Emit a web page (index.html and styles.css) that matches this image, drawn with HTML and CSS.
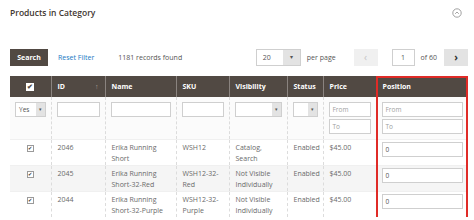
FILE: index.html
```html
<!DOCTYPE html>
<html>
<head>
<title>Products in Category</title>
<link rel="stylesheet" href="styles.css">
</head>
<body>
<div class="section">
  <div class="section-head">
    <span class="section-title">Products in Category</span>
    <svg class="collapse" width="10" height="10" viewBox="0 0 10 10">
      <circle cx="5" cy="5" r="4.2" fill="none" stroke="#8a8a8a" stroke-width="0.8"/>
      <path d="M3.2 5.8 L5 4 L6.8 5.8" fill="none" stroke="#8a8a8a" stroke-width="0.8"/>
    </svg>
  </div>

  <div class="toolbar">
    <button class="btn-search">Search</button>
    <a class="reset">Reset Filter</a>
    <span class="records">1181 records found</span>
    <div class="pager">
      <div class="perpage-select"><span class="val">20</span><span class="arrow">&#9662;</span></div>
      <span class="perpage-label">per page</span>
      <button class="nav prev">&lsaquo;</button>
      <div class="page-input">1</div>
      <span class="of">of 60</span>
      <button class="nav next">&rsaquo;</button>
    </div>
  </div>

  <div class="grid-wrap">
    <table class="grid">
      <colgroup>
        <col class="c-cb"><col class="c-id"><col class="c-name"><col class="c-sku">
        <col class="c-vis"><col class="c-status"><col class="c-price"><col class="c-pos">
      </colgroup>
      <thead>
        <tr class="head">
          <th class="center"><span class="hcheck">&#10004;</span></th>
          <th>ID <span class="sort">&#8593;</span></th>
          <th>Name</th>
          <th>SKU</th>
          <th>Visibility</th>
          <th>Status</th>
          <th>Price</th>
          <th>Position</th>
        </tr>
        <tr class="filters">
          <td><div class="select small"><span>Yes</span><span class="arrow">&#9662;</span></div></td>
          <td><div class="input"></div></td>
          <td><div class="input"></div></td>
          <td><div class="input"></div></td>
          <td><div class="select"><span></span><span class="arrow">&#9662;</span></div></td>
          <td><div class="select"><span></span><span class="arrow">&#9662;</span></div></td>
          <td><div class="input ph">From</div><div class="input ph">To</div></td>
          <td><div class="input ph">From</div><div class="input ph">To</div></td>
        </tr>
      </thead>
      <tbody>
        <tr>
          <td class="center"><span class="check">&#10004;</span></td>
          <td>2046</td>
          <td>Erika Running Short</td>
          <td>WSH12</td>
          <td>Catalog, Search</td>
          <td>Enabled</td>
          <td>$45.00</td>
          <td><div class="input val">0</div></td>
        </tr>
        <tr class="alt">
          <td class="center"><span class="check">&#10004;</span></td>
          <td>2045</td>
          <td>Erika Running Short-32-Red</td>
          <td>WSH12-32-Red</td>
          <td>Not Visible Individually</td>
          <td>Enabled</td>
          <td>$45.00</td>
          <td><div class="input val">0</div></td>
        </tr>
        <tr>
          <td class="center"><span class="check">&#10004;</span></td>
          <td>2044</td>
          <td>Erika Running Short-32-Purple</td>
          <td>WSH12-32-Purple</td>
          <td>Not Visible Individually</td>
          <td>Enabled</td>
          <td>$45.00</td>
          <td><div class="input val">0</div></td>
        </tr>
      </tbody>
    </table>
    <div class="highlight"></div>
  </div>
</div>
</body>
</html>
```

FILE: styles.css
```css
body {
    margin: 0;
    padding: 0;
    background: #fff;
    font-family: "Open Sans", "Liberation Sans", sans-serif;
    color: #303030;
    overflow: hidden;
}

.section {
    width: 458px;
    padding-left: 10px;
}

.section-head {
    display: flex;
    justify-content: space-between;
    align-items: center;
    padding-top: 7px;
    height: 12px;
}

.section-title {
    font-size: 8.5px;
    font-weight: 600;
    color: #41362f;
    line-height: 12px;
}

.collapse {
    margin-right: 6px;
}

.toolbar {
    display: flex;
    align-items: center;
    margin-top: 30px;
    height: 17px;
}

.btn-search {
    width: 38px;
    height: 17px;
    border: 0;
    padding: 0;
    background: #514943;
    color: #fff;
    font-family: inherit;
    font-size: 7px;
    font-weight: 700;
}

.reset {
    margin-left: 10px;
    font-size: 7px;
    color: #1979c3;
}

.records {
    margin-left: 24px;
    font-size: 7px;
    color: #555;
}

.pager {
    margin-left: auto;
    display: flex;
    align-items: center;
    font-size: 7px;
    color: #555;
}

.perpage-select {
    display: flex;
    width: 45px;
    height: 17px;
    box-sizing: border-box;
    border: 1px solid #cfcfcf;
}

.perpage-select .val {
    flex: 1;
    padding-left: 6px;
    line-height: 15px;
}

.perpage-select .arrow,
.select .arrow {
    width: 17px;
    background: #e3e3e3;
    color: #555;
    font-size: 6px;
    text-align: center;
    line-height: 15px;
}

.perpage-label {
    margin-left: 6px;
}

.nav {
    width: 24px;
    height: 17px;
    border: 0;
    padding: 0;
    font-family: inherit;
    font-size: 10px;
    line-height: 17px;
}

.prev {
    margin-left: 18px;
    background: #f0f0f0;
    color: #c4c4c4;
}

.next {
    margin-left: 7px;
    background: #e3e3e3;
    color: #303030;
    font-weight: bold;
}

.page-input {
    margin-left: 14px;
    width: 23px;
    height: 17px;
    box-sizing: border-box;
    border: 1px solid #cfcfcf;
    text-align: center;
    line-height: 15px;
}

.of {
    margin-left: 6px;
}

.grid-wrap {
    position: relative;
    margin-top: 10px;
}

.grid {
    width: 458px;
    table-layout: fixed;
    border-collapse: collapse;
    font-size: 7px;
}

.c-cb { width: 41px; }
.c-id { width: 54px; }
.c-name { width: 71px; }
.c-sku { width: 53px; }
.c-vis { width: 58px; }
.c-status { width: 36px; }
.c-price { width: 53px; }
.c-pos { width: 92px; }

.head th {
    height: 21px;
    padding: 0 6px;
    background: #514943;
    color: #fff;
    font-weight: 700;
    text-align: left;
    border-left: 1px solid #8a837f;
}

.head th:first-child {
    border-left: 0;
}

.center {
    text-align: center !important;
}

.hcheck {
    display: inline-block;
    width: 8px;
    height: 8px;
    background: #fff;
    color: #514943;
    font-size: 7px;
    line-height: 8px;
    text-align: center;
}

.sort {
    float: right;
    color: #a79d95;
    font-weight: 400;
}

.filters td {
    height: 42px;
    padding: 5px 5px;
    vertical-align: top;
    background: #fbfbfb;
    border-left: 1px dashed #dcdcdc;
    box-sizing: border-box;
}

.filters td:first-child {
    border-left: 0;
}

.input {
    height: 15px;
    box-sizing: border-box;
    border: 1px solid #cfcfcf;
    background: #fff;
    font-size: 6.5px;
    line-height: 13px;
    padding-left: 3px;
}

.input + .input {
    margin-top: 2px;
}

.ph {
    color: #a0a0a0;
}

.select {
    display: flex;
    height: 15px;
    box-sizing: border-box;
    border: 1px solid #cfcfcf;
    background: #fff;
    font-size: 6.5px;
    line-height: 13px;
}

.select span:first-child {
    flex: 1;
    padding-left: 3px;
    color: #555;
}

.select .arrow {
    width: 9px;
    line-height: 13px;
    font-size: 5px;
}

tbody td {
    padding: 2px 6px 1px;
    vertical-align: top;
    color: #6a6a6a;
    line-height: 11px;
    border-left: 1px dashed #dcdcdc;
}

tbody td:first-child {
    border-left: 0;
}

tbody tr {
    border-top: 1px solid #f0f0f0;
}

tbody tr.alt td {
    background: #f5f5f5;
}

tbody td:last-child {
    padding: 2px 5px 0;
}

.val {
    color: #555;
}

.check {
    display: inline-block;
    width: 7px;
    height: 7px;
    box-sizing: border-box;
    border: 1px solid #9a9a9a;
    background: #fff;
    color: #333;
    font-size: 5px;
    line-height: 5px;
    margin-top: 2px;
}

.highlight {
    position: absolute;
    left: 366px;
    top: 0;
    width: 92px;
    height: 160px;
    box-sizing: border-box;
    border: 2px solid #e02b27;
    border-bottom-width: 0;
}
```
